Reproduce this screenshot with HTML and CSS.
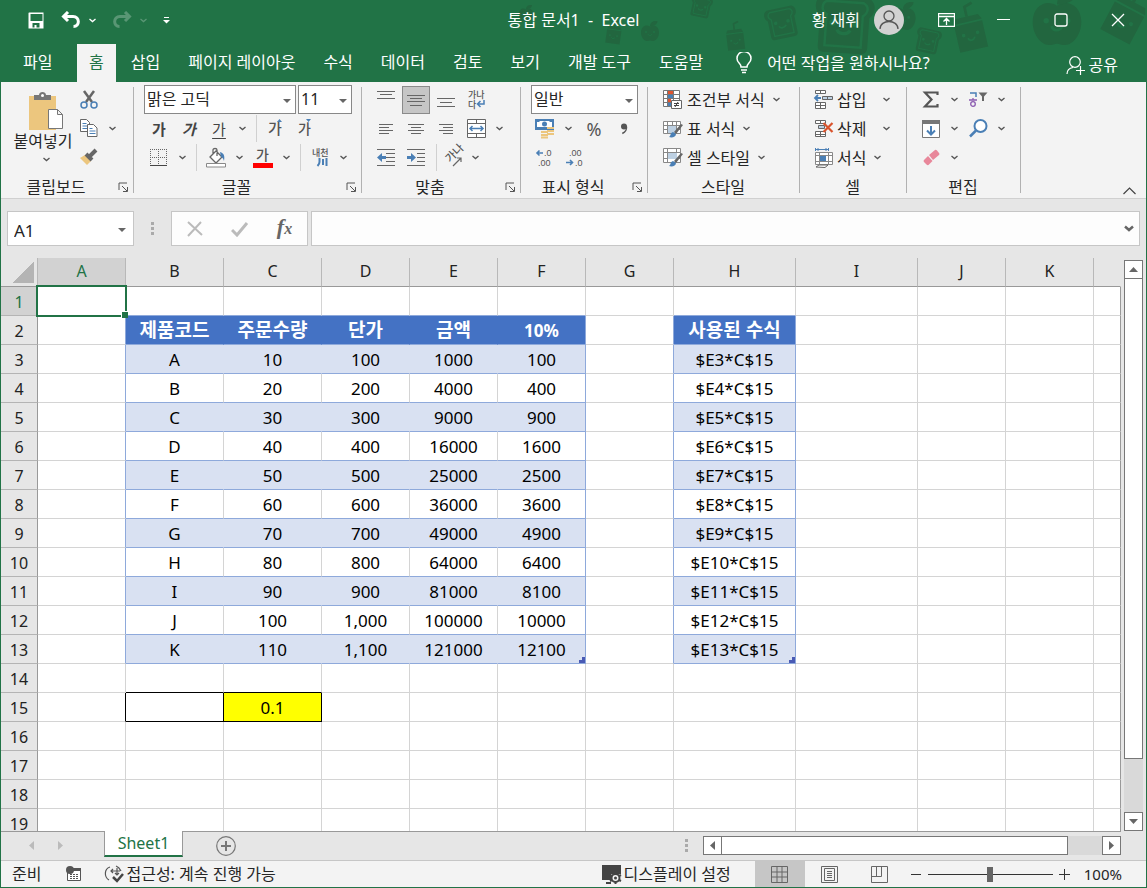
FILE: index.html
```html
<!DOCTYPE html>
<html lang="ko">
<head>
    <meta charset="UTF-8">
    <meta name="viewport" content="width=device-width, initial-scale=1.0">
    <title>통합 문서1 - Excel</title>
    <link rel="stylesheet" href="styles.css">
</head>
<body>
    <svg class="defs" aria-hidden="true">
        <symbol id="chev" viewBox="0 0 7 5"><path d="M.5 1l3 2.600 3-2.600" fill="none" stroke="currentColor" stroke-width="1.300"/></symbol>
        <symbol id="launch" viewBox="0 0 11 11"><path d="M1 8V1h8M4 4l5 5M9.500 5v4.500H5" fill="none" stroke="#555"/></symbol>
        <symbol id="brushcell" viewBox="0 0 20 19">
            <path d="M11 13l7-8 2 1-7 9z" fill="#666"/><path d="M6 18c2-1 1-4 4-5l3 2c0 3-4 4-7 3z" fill="#4a7fb5"/>
        </symbol>
        <symbol id="toast" viewBox="0 0 40 40">
            <path d="M6 3h28c5 2 5 9 1 12v18c0 3-2 4-4 4H9c-3 0-4-1-4-4V15C1 12 1 5 6 3z" fill="currentColor"/>
            <path d="M9 6h22c4 2 3 6 0 8v19H9V14C5 12 6 7 9 6z" fill="none" stroke="#217346" stroke-width="1.500"/>
            <circle cx="13" cy="19" r="2" fill="#217346"/><circle cx="27" cy="19" r="2" fill="#217346"/>
            <path d="M16 23c1 3 6 3 8 0" fill="none" stroke="#217346" stroke-width="2"/>
        </symbol>
        <symbol id="carton" viewBox="0 0 40 56">
            <path d="M4 24h32v30H4zM7 16h26l3 6H4z" fill="currentColor"/>
            <path d="M20 16V5l9-3" fill="none" stroke="currentColor" stroke-width="3"/>
            <circle cx="12" cy="36" r="2" fill="#217346"/><circle cx="28" cy="36" r="2" fill="#217346"/>
            <path d="M16 40c1 4 6 4 8 0" fill="none" stroke="#217346" stroke-width="2"/>
        </symbol>
        <symbol id="apple" viewBox="0 0 40 44">
            <path d="M20 13c7-5 18-1 18 12 0 9-6 17-12 17-3 0-4-1-6-1s-3 1-6 1C8 42 2 34 2 25 2 12 13 8 20 13z" fill="currentColor"/>
            <path d="M20 12c0-7 6-11 15-10 0 6-6 10-15 10z" fill="currentColor"/>
            <circle cx="12" cy="24" r="2" fill="#217346"/><circle cx="28" cy="24" r="2" fill="#217346"/>
            <path d="M16 28c1 4 6 4 8 0" fill="none" stroke="#217346" stroke-width="2"/>
        </symbol>
    </svg>

    <div class="window">
        <header class="head">
            <svg class="doodles" width="637" height="60" aria-hidden="true">
                <use href="#apple" x="9" y="3" width="16" height="20"/>
                <use href="#carton" x="96" y="18" width="18" height="28" transform="rotate(8 105 32)"/>
                <use href="#apple" x="131" y="20" width="20" height="22"/>
                <use href="#toast" x="180" y="-5" width="24" height="24" transform="rotate(12 192 7)"/>
                <use href="#carton" x="214" y="21" width="24" height="30" transform="rotate(-7 226 36)"/>
                <use href="#toast" x="255" y="5" width="36" height="36" transform="rotate(-12 273 23)"/>
                <use href="#toast" x="302" y="-8" width="66" height="66" transform="rotate(4 335 25)"/>
                <use href="#apple" x="380" y="0" width="28" height="32"/>
                <use href="#toast" x="405" y="27" width="28" height="28" transform="rotate(12 419 41)"/>
                <use href="#carton" x="440" y="2" width="40" height="50" transform="rotate(-13 460 27)"/>
                <use href="#apple" x="521" y="-12" width="54" height="60"/>
                <use href="#carton" x="596" y="-16" width="46" height="58" transform="rotate(28 619 12)"/>
            </svg>
            <div class="titlebar">
                <div class="qat">
                    <button aria-label="저장"><svg width="17" height="17" viewBox="0 0 17 17"><path d="M1 .5h14.500v16H.500V1zM2.500 2v7h12V2zM4.500 11v4.500h2V13h2v2.500h3V11z" fill="#fff" fill-rule="evenodd"/></svg></button>
                    <span class="split">
                        <button aria-label="실행 취소"><svg width="20" height="18" viewBox="0 0 20 18"><path d="M7 1L2.500 5.500 7 10M3 5.500h9c7 0 7 10 .500 10" fill="none" stroke="#fff" stroke-width="3"/></svg></button>
                        <button aria-label="실행 취소 목록"><svg width="7" height="5"><use href="#chev"/></svg></button>
                    </span>
                    <span class="split faded">
                        <button aria-label="다시 실행"><svg width="20" height="18" viewBox="0 0 20 18"><path d="M13 1l4.500 4.500L13 10M17 5.500H8c-7 0-7 10-.500 10" fill="none" stroke="#fff" stroke-width="3"/></svg></button>
                        <button aria-label="다시 실행 목록"><svg width="7" height="5"><use href="#chev"/></svg></button>
                    </span>
                    <button aria-label="빠른 실행 도구 모음 사용자 지정"><svg width="7" height="7"><path d="M1 .500h5" stroke="#fff"/><path d="M0 3h7L3.500 6.500z" fill="#fff"/></svg></button>
                </div>
                <div class="doc-title">통합 문서1&nbsp; -&nbsp; Excel</div>
                <div class="account">
                    <span>황 재휘</span>
                    <svg class="avatar" width="30" height="30"><circle cx="15" cy="15" r="15" fill="#d2d2d2"/><circle cx="15" cy="11" r="5" fill="none" stroke="#555" stroke-width="1.300"/><path d="M6 24c0-10 18-10 18 0" fill="none" stroke="#555" stroke-width="1.300"/></svg>
                    <button class="win-btn" aria-label="리본 메뉴 표시 옵션"><svg width="17" height="14"><path d="M.500.500h16v13H.500zM.500 3.500h16M8.500 12V6M5.500 8.500l3-3 3 3" fill="none" stroke="#fff" stroke-width="1.300"/></svg></button>
                    <button class="win-btn" aria-label="최소화"><svg width="14" height="14"><path d="M0 6.500h13" stroke="#fff"/></svg></button>
                    <button class="win-btn" aria-label="최대화"><svg width="14" height="14"><rect x="1" y="1" width="12" height="12" rx="2" fill="none" stroke="#fff" stroke-width="1.300"/></svg></button>
                    <button class="win-btn" aria-label="닫기"><svg width="14" height="14"><path d="M1 1l12 12M13 1L1 13" stroke="#fff" stroke-width="1.300"/></svg></button>
                </div>
            </div>
            <nav class="tabs">
                <a class="file" href="#">파일</a>
                <a class="active" href="#">홈</a>
                <a href="#">삽입</a>
                <a href="#">페이지 레이아웃</a>
                <a href="#">수식</a>
                <a href="#">데이터</a>
                <a href="#">검토</a>
                <a href="#">보기</a>
                <a href="#">개발 도구</a>
                <a href="#">도움말</a>
                <button class="tell">
                    <svg width="16" height="22" viewBox="0 0 16 22"><path d="M5 15c0-4-4-4-4-8.500a6.500 6.500 0 0 1 14 0C15 11 11 11 11 15zM5 18h6M6 20.500h4" fill="none" stroke="#fff" stroke-width="1.500"/></svg>
                    어떤 작업을 원하시나요?
                </button>
                <button class="share">
                    <svg width="19" height="19"><circle cx="9" cy="6" r="5.300" fill="none" stroke="#fff" stroke-width="1.200"/><path d="M1 18c0-4 3-6 6-6.500M14.500 10v9M10 14.500h9" fill="none" stroke="#fff" stroke-width="1.200"/></svg>
                    공유
                </button>
            </nav>
        </header>

        <section class="ribbon">
            <div class="group g-clip">
                <div class="clip">
                    <button class="paste">
                        <svg width="34" height="39"><path d="M0 5h27v34H0z" fill="#ecc67e"/><path d="M5 4h5c0-4 7-4 7 0h5v5H5z" fill="#777"/><circle cx="13.500" cy="4.500" r="1.500" fill="#fff"/><path d="M19.500 18.500h9l5 5v14h-14zM28.500 18.500v5h5" fill="#fff" stroke="#777"/></svg>
                        <span>붙여넣기</span>
                        <svg width="7" height="5"><use href="#chev"/></svg>
                    </button>
                    <div class="rows">
                        <div class="row"><button class="ico" aria-label="잘라내기"><svg width="18" height="19"><path d="M4 1l8 11M14 1L6 12" stroke="#666" stroke-width="2.500"/><circle cx="4" cy="15" r="3" fill="none" stroke="#4a7fb5" stroke-width="1.500"/><circle cx="14" cy="15" r="3" fill="none" stroke="#4a7fb5" stroke-width="1.500"/></svg></button></div>
                        <div class="row"><button class="ico" aria-label="복사"><svg width="18" height="19"><path d="M.500.500h6l3 3v9h-9z" fill="#fff" stroke="#666"/><path d="M2.500 4.500h4M2.500 7h5M2.500 9.500h5" stroke="#4a7fb5"/><path d="M7.500 5.500h6l3.500 3.500v8.500H7.500z" fill="#fff" stroke="#666"/><path d="M9.500 9.500h3M9.500 12h6M9.500 14.500h6" stroke="#4a7fb5"/></svg></button><button class="dd" aria-label="복사 옵션"><svg width="7" height="5"><use href="#chev"/></svg></button></div>
                        <div class="row"><button class="ico" aria-label="서식 복사"><svg width="18" height="17"><path d="M0 9l5-3 6 6-4 4z" fill="#ecc67e"/><path d="M6 5l6 6M9 8l7-7" stroke="#666" stroke-width="4"/></svg></button></div>
                    </div>
                </div>
                <div class="caption"><span>클립보드</span><button aria-label="클립보드 옵션"><svg width="11" height="11"><use href="#launch"/></svg></button></div>
            </div>

            <div class="group g-font">
                <div class="row">
                    <span class="pick font-name"><select aria-label="글꼴"><option>맑은 고딕</option></select></span>
                    <span class="pick font-size"><select aria-label="글꼴 크기"><option>11</option></select></span>
                </div>
                <div class="row">
                    <button class="ico ga bold">가</button>
                    <button class="ico ga bold italic">가</button>
                    <button class="ico ga under">가</button>
                    <button class="dd" aria-label="밑줄 옵션"><svg width="7" height="5"><use href="#chev"/></svg></button>
                    <i class="sep"></i>
                    <button class="ico" aria-label="글꼴 크기 크게"><svg width="18" height="19"><text class="st" x="1" y="15" font-size="15">가</text><path d="M10 3l2.500-3L15 3z" fill="#4a7fb5"/></svg></button>
                    <button class="ico" aria-label="글꼴 크기 작게"><svg width="18" height="19"><text class="st" x="1" y="15" font-size="14">가</text><path d="M9 0l2.500 3L14 0z" fill="#4a7fb5"/></svg></button>
                </div>
                <div class="row">
                    <button class="ico" aria-label="테두리"><svg width="18" height="18"><path d="M.500 0v17M8.500 0v17M16.500 0v17M0 .500h17M0 8.500h17" stroke="#666" stroke-dasharray="1 1"/><path d="M0 16.500h17" stroke="#444"/></svg></button>
                    <button class="dd" aria-label="테두리 옵션"><svg width="7" height="5"><use href="#chev"/></svg></button>
                    <i class="sep"></i>
                    <button class="ico" aria-label="채우기 색"><svg width="21" height="20"><path d="M4 9l6-6 6 6-6 6zM7 6V2c0-2 4-2 4 0v6" fill="#fff" stroke="#666" stroke-width="1.300"/><path d="M14 4c4 1 5 4 4 9-1-3-2-4-3-4z" fill="#4a7fb5"/><path d="M.500 15.500h19v3.500H.500z" fill="#fff" stroke="#888"/></svg></button>
                    <button class="dd" aria-label="채우기 색 옵션"><svg width="7" height="5"><use href="#chev"/></svg></button>
                    <button class="ico" aria-label="글꼴 색"><svg width="20" height="20"><text class="st" x="3" y="12" font-size="14">가</text><path d="M0 15h20v5H0z" fill="#f00"/></svg></button>
                    <button class="dd" aria-label="글꼴 색 옵션"><svg width="7" height="5"><use href="#chev"/></svg></button>
                    <i class="sep"></i>
                    <button class="ico" aria-label="윗주 필드"><svg width="18" height="19"><text class="st" x="1" y="8" font-size="9">내천</text><path d="M8.500 10v4c0 2-1 3-2 4M12 11v6M15.500 10v8" fill="none" stroke="#4a7fb5" stroke-width="2"/></svg></button>
                    <button class="dd" aria-label="윗주 옵션"><svg width="7" height="5"><use href="#chev"/></svg></button>
                </div>
                <div class="caption"><span>글꼴</span><button aria-label="글꼴 설정"><svg width="11" height="11"><use href="#launch"/></svg></button></div>
            </div>

            <div class="group g-align">
                <div class="row">
                    <button class="ico" aria-label="위쪽 맞춤"><svg width="18" height="18"><path d="M0 .500h18M3 3.500h12M0 7.500h18" stroke="#666"/></svg></button>
                    <button class="ico on" aria-label="가운데 맞춤"><svg width="18" height="18"><path d="M0 4.500h18M3 7.500h12M0 10.500h18M3 14.500h12" stroke="#666"/></svg></button>
                    <button class="ico" aria-label="아래쪽 맞춤"><svg width="18" height="18"><path d="M0 7.500h18M3 11.500h12M0 15.500h18" stroke="#666"/></svg></button>
                    <button class="ico" aria-label="텍스트 줄 바꿈"><svg width="18" height="19"><text class="st" x="1" y="8" font-size="9">가나</text><text class="st" x="1" y="18" font-size="9">다</text><path d="M17 10v4h-6M13.500 11l-3 3 3 3" fill="none" stroke="#4a7fb5" stroke-width="1.500"/></svg></button>
                </div>
                <div class="row">
                    <button class="ico" aria-label="왼쪽 맞춤"><svg width="14" height="12"><path d="M0 1.500h14M0 4.500h10M0 7.500h14M0 10.500h10" stroke="#666"/></svg></button>
                    <button class="ico" aria-label="텍스트 가운데 맞춤"><svg width="16" height="12"><path d="M0 1.500h16M3 4.500h10M0 7.500h16M3 10.500h10" stroke="#666"/></svg></button>
                    <button class="ico" aria-label="오른쪽 맞춤"><svg width="14" height="12"><path d="M0 1.500h14M4 4.500h10M0 7.500h14M4 10.500h10" stroke="#666"/></svg></button>
                    <button class="ico" aria-label="병합하고 가운데 맞춤"><svg width="19" height="19"><path d="M.500.500h18v18H.500zM.500 4.500h18M.500 14.500h18M9.500.500v4M9.500 14.500v4" fill="#fff" stroke="#666"/><path d="M3 9.500h13M5.500 7l-2.500 2.500L5.500 12M13.500 7l2.500 2.500-2.500 2.500" fill="none" stroke="#4a7fb5" stroke-width="1.500"/></svg></button>
                    <button class="dd" aria-label="병합 옵션"><svg width="7" height="5"><use href="#chev"/></svg></button>
                </div>
                <div class="row">
                    <button class="ico" aria-label="내어쓰기"><svg width="18" height="17"><path d="M0 .500h18M9 4.500h9M9 8.500h9M9 12.500h9M0 16.500h18" stroke="#666"/><path d="M0 8.500L5 4v3h4v3H5v3z" fill="#4a7fb5"/></svg></button>
                    <button class="ico" aria-label="들여쓰기"><svg width="18" height="17"><path d="M0 .500h18M10 4.500h8M10 8.500h8M10 12.500h8M0 16.500h18" stroke="#666"/><path d="M9 8.500L4 4v3H0v3h4v3z" fill="#4a7fb5"/></svg></button>
                    <i class="sep"></i>
                    <button class="ico narrow" aria-label="방향"><svg width="20" height="19"><text class="st" x="0" y="0" font-size="11" transform="translate(6 15) rotate(-45)">가나</text><path d="M9 18l8-8M13 10h4v4" fill="none" stroke="#666" stroke-width="1.200"/></svg></button>
                    <button class="dd" aria-label="방향 옵션"><svg width="7" height="5"><use href="#chev"/></svg></button>
                </div>
                <div class="caption"><span>맞춤</span><button aria-label="맞춤 설정"><svg width="11" height="11"><use href="#launch"/></svg></button></div>
            </div>

            <div class="group g-number">
                <div class="row"><span class="pick num-format"><select aria-label="표시 형식"><option>일반</option></select></span></div>
                <div class="row">
                    <button class="ico" aria-label="회계 표시 형식"><svg width="20" height="19"><path d="M0 0h19v11H0z" fill="#4a7fb5"/><path d="M2 3h2l1-1h9l1 1h2v5H2z" fill="#fff"/><circle cx="9.500" cy="5" r="2.500" fill="#4a7fb5"/><path d="M12 9h7M12 12h7M12 15h7M6 13h7M6 16h7M6 18.500h7" stroke="#ecc67e" stroke-width="2"/></svg></button>
                    <button class="dd" aria-label="회계 형식 옵션"><svg width="7" height="5"><use href="#chev"/></svg></button>
                    <button class="ico sign">%</button>
                    <button class="ico" aria-label="쉼표 스타일"><svg width="8" height="12"><circle cx="4" cy="3.500" r="3" fill="#555"/><path d="M6.300 3c1 3-1 6-4 7.500" fill="none" stroke="#555" stroke-width="1.500"/></svg></button>
                </div>
                <div class="row">
                    <button class="ico" aria-label="자릿수 늘림"><svg width="18" height="20"><text class="st num" x="8" y="8" font-size="9">.0</text><text class="st num" x="2" y="18" font-size="9">.00</text><path d="M7 5H1M3.500 2.500L1 5l2.500 2.500" fill="none" stroke="#4a7fb5" stroke-width="1.600"/></svg></button>
                    <button class="ico" aria-label="자릿수 줄임"><svg width="18" height="20"><text class="st num" x="3" y="8" font-size="9">.00</text><text class="st num" x="9" y="18" font-size="9">.0</text><path d="M0 14.500h6.500M4 12l2.500 2.500L4 17" fill="none" stroke="#4a7fb5" stroke-width="1.600"/></svg></button>
                </div>
                <div class="caption"><span>표시 형식</span><button aria-label="표시 형식 설정"><svg width="11" height="11"><use href="#launch"/></svg></button></div>
            </div>

            <div class="group g-style">
                <div class="row"><button class="cmd"><svg width="20" height="19"><path d="M.500.500h16v16H.500zM4.500.500v16M10.500.500v16M.500 4.500h16M.500 8.500h16M.500 12.500h16" fill="#fff" stroke="#777"/><path d="M5 1h5v3H5zM5 9h3v3H5z" fill="#e0532f"/><path d="M5 5h5v3H5zM5 13h3v3H5z" fill="#4a7fb5"/><path d="M8.500 10.500h10v8h-10z" fill="#fff" stroke="#666"/><path d="M11 13.500h5M11 15.500h5M15 12l-3 5" stroke="#444"/></svg><span>조건부 서식</span><svg width="7" height="5"><use href="#chev"/></svg></button></div>
                <div class="row"><button class="cmd"><svg width="20" height="19"><path d="M.500 2.500h17v12H.500zM4.500 2.500v12M9.500 2.500v12M13.500 2.500v12M.500 6.500h17M.500 10.500h17" fill="#fff" stroke="#888"/><path d="M5 7h8v7H5z" fill="#bdd0e2"/><use href="#brushcell" width="20" height="19"/></svg><span>표 서식</span><svg width="7" height="5"><use href="#chev"/></svg></button></div>
                <div class="row"><button class="cmd"><svg width="20" height="19"><path d="M.500.500h17v14H.500zM4.500.500v14M.500 4.500h17M.500 10.500h17M13.500.500v14" fill="#fff" stroke="#888"/><path d="M5 5h9v6H5z" fill="#bdd0e2"/><use href="#brushcell" width="20" height="19"/></svg><span>셀 스타일</span><svg width="7" height="5"><use href="#chev"/></svg></button></div>
                <div class="caption plain"><span>스타일</span></div>
            </div>

            <div class="group g-cell">
                <div class="row"><button class="cmd"><svg width="19" height="19"><path d="M1.500.500h10v3h-10zM6.500.500v3M1.500 12.500h10v6h-10zM6.500 12.500v6M1.500 15.500h10" fill="#fff" stroke="#666"/><path d="M8.500 6.500h10v3h-10zM13.500 6.500v3" fill="#bdd0e2" stroke="#666"/><path d="M7 8H1M4 5L1 8l3 3" fill="none" stroke="#4a7fb5" stroke-width="1.800"/></svg><span>삽입</span></button><button class="dd far" aria-label="삽입 옵션"><svg width="7" height="5"><use href="#chev"/></svg></button></div>
                <div class="row"><button class="cmd"><svg width="19" height="19"><path d="M1.500 1.500h10v3h-10zM6.500 1.500v3M1.500 12.500h10v5h-10zM6.500 12.500v5M1.500 15.500h10" fill="#fff" stroke="#666"/><path d="M4.500 6.500h6v3h-6z" fill="#bdd0e2" stroke="#666"/><path d="M9.500 4l9 9M18.500 4l-9 9" stroke="#d9532c" stroke-width="2.200"/></svg><span>삭제</span></button><button class="dd far" aria-label="삭제 옵션"><svg width="7" height="5"><use href="#chev"/></svg></button></div>
                <div class="row"><button class="cmd"><svg width="19" height="20"><path d="M1 1.500h14M1.500 0v3M14.500 0v3M4 0v3M12 0v3" stroke="#4a7fb5"/><path d="M1.500 4.500h17v12h-17zM5.500 4.500v12M14.500 4.500v12M1.500 7.500h17M1.500 13.500h17" fill="#fff" stroke="#888"/><path d="M6 8h6v5H6z" fill="#4a7fb5"/><path d="M2 19l3-2h9l-3 2.500z" fill="#fff" stroke="#666"/></svg><span>서식</span><svg width="7" height="5"><use href="#chev"/></svg></button></div>
                <div class="caption plain"><span>셀</span></div>
            </div>

            <div class="group g-edit">
                <div class="row">
                    <button class="ico" aria-label="자동 합계"><svg width="16" height="17"><path d="M14.500 4V1.500H2l6.500 7-6.500 7h12.500V13" fill="none" stroke="#555" stroke-width="2.200"/></svg></button>
                    <button class="dd" aria-label="합계 옵션"><svg width="7" height="5"><use href="#chev"/></svg></button>
                    <button class="ico" aria-label="정렬 및 필터"><svg width="19" height="17"><path d="M1 2h6v4" fill="none" stroke="#4a7fb5" stroke-width="1.500"/><path d="M0 9h8M4 7v2" stroke="#8b5bb0" stroke-width="1.300"/><circle cx="4" cy="13" r="2.300" fill="none" stroke="#8b5bb0" stroke-width="1.300"/><path d="M9.500 1.500h9l-3.500 4v4.500h-2V5.500z" fill="#666"/></svg></button>
                    <button class="dd" aria-label="정렬 옵션"><svg width="7" height="5"><use href="#chev"/></svg></button>
                </div>
                <div class="row">
                    <button class="ico" aria-label="채우기"><svg width="18" height="18"><path d="M.500.500h17v17H.500z" fill="#fff" stroke="#777"/><path d="M0 0h18v4H0z" fill="#777"/><path d="M9 6v8M5 10.500l4 4 4-4" fill="none" stroke="#4a7fb5" stroke-width="2"/></svg></button>
                    <button class="dd" aria-label="채우기 옵션"><svg width="7" height="5"><use href="#chev"/></svg></button>
                    <button class="ico" aria-label="찾기 및 선택"><svg width="19" height="19"><circle cx="11.500" cy="7" r="6" fill="#fff" stroke="#4a7fb5" stroke-width="2"/><path d="M7 11.500L1 17.500" stroke="#4a7fb5" stroke-width="2.500"/></svg></button>
                    <button class="dd" aria-label="찾기 옵션"><svg width="7" height="5"><use href="#chev"/></svg></button>
                </div>
                <div class="row">
                    <button class="ico" aria-label="지우기"><svg width="17" height="17"><path d="M6 6l6-5q1-.500 2 .500l2 2.500q1 1 0 2l-6 5z" fill="#e8879a"/><path d="M5 7l4.500 5-4 4q-1 .500-2-.500L1 13q-1-1 0-2z" fill="#e8879a"/></svg></button>
                    <button class="dd" aria-label="지우기 옵션"><svg width="7" height="5"><use href="#chev"/></svg></button>
                </div>
                <div class="caption plain"><span>편집</span></div>
            </div>
            <button class="collapse" aria-label="리본 메뉴 축소"><svg width="13" height="8"><path d="M.500 7l6-6 6 6" fill="none" stroke="#444" stroke-width="1.200"/></svg></button>
        </section>

        <section class="formula">
            <span class="pick name-box"><input type="text" aria-label="이름 상자" value="A1"></span>
            <i class="dots"></i>
            <div class="fx-box">
                <button aria-label="취소"><svg width="16" height="16"><path d="M1 1l14 13M14 1L1 15" stroke="#bbb" stroke-width="2"/></svg></button>
                <button aria-label="입력"><svg width="18" height="16"><path d="M1 9l5 5L16 2" fill="none" stroke="#bbb" stroke-width="3"/></svg></button>
                <button class="fx" aria-label="함수 삽입"><i>f</i><i class="x">x</i></button>
            </div>
            <div class="fx-input">
                <input type="text" aria-label="수식 입력줄">
                <button aria-label="수식 입력줄 확장"><svg width="10" height="7"><path d="M1 1.500l4 3.500 4-3.500" fill="none" stroke="#666" stroke-width="2.500"/></svg></button>
            </div>
        </section>

        <main class="grid-area">
            <div class="sheet">
                <table>
                    <colgroup>
                        <col class="w-row"><col class="w-s"><col class="w-m"><col class="w-m"><col class="w-s"><col class="w-s"><col class="w-s"><col class="w-s"><col class="w-l"><col class="w-l"><col class="w-s"><col class="w-s"><col>
                    </colgroup>
                    <thead>
                        <tr><th class="corner"></th><th class="sel">A</th><th>B</th><th>C</th><th>D</th><th>E</th><th>F</th><th>G</th><th>H</th><th>I</th><th>J</th><th>K</th><th></th></tr>
                    </thead>
                    <tbody>
                        <tr class="first"><th class="sel">1</th><td class="cursor"></td><td></td><td></td><td></td><td></td><td></td><td></td><td></td><td></td><td></td><td></td><td></td></tr>
                        <tr class="data title"><th>2</th><td></td><td>제품코드</td><td>주문수량</td><td>단가</td><td>금액</td><td>10%</td><td></td><td>사용된 수식</td><td></td><td></td><td></td><td></td></tr>
                        <tr class="data band"><th>3</th><td></td><td>A</td><td>10</td><td>100</td><td>1000</td><td>100</td><td></td><td>$E3*C$15</td><td></td><td></td><td></td><td></td></tr>
                        <tr class="data"><th>4</th><td></td><td>B</td><td>20</td><td>200</td><td>4000</td><td>400</td><td></td><td>$E4*C$15</td><td></td><td></td><td></td><td></td></tr>
                        <tr class="data band"><th>5</th><td></td><td>C</td><td>30</td><td>300</td><td>9000</td><td>900</td><td></td><td>$E5*C$15</td><td></td><td></td><td></td><td></td></tr>
                        <tr class="data"><th>6</th><td></td><td>D</td><td>40</td><td>400</td><td>16000</td><td>1600</td><td></td><td>$E6*C$15</td><td></td><td></td><td></td><td></td></tr>
                        <tr class="data band"><th>7</th><td></td><td>E</td><td>50</td><td>500</td><td>25000</td><td>2500</td><td></td><td>$E7*C$15</td><td></td><td></td><td></td><td></td></tr>
                        <tr class="data"><th>8</th><td></td><td>F</td><td>60</td><td>600</td><td>36000</td><td>3600</td><td></td><td>$E8*C$15</td><td></td><td></td><td></td><td></td></tr>
                        <tr class="data band"><th>9</th><td></td><td>G</td><td>70</td><td>700</td><td>49000</td><td>4900</td><td></td><td>$E9*C$15</td><td></td><td></td><td></td><td></td></tr>
                        <tr class="data"><th>10</th><td></td><td>H</td><td>80</td><td>800</td><td>64000</td><td>6400</td><td></td><td>$E10*C$15</td><td></td><td></td><td></td><td></td></tr>
                        <tr class="data band"><th>11</th><td></td><td>I</td><td>90</td><td>900</td><td>81000</td><td>8100</td><td></td><td>$E11*C$15</td><td></td><td></td><td></td><td></td></tr>
                        <tr class="data"><th>12</th><td></td><td>J</td><td>100</td><td>1,000</td><td>100000</td><td>10000</td><td></td><td>$E12*C$15</td><td></td><td></td><td></td><td></td></tr>
                        <tr class="data band"><th>13</th><td></td><td>K</td><td>110</td><td>1,100</td><td>121000</td><td class="end">12100</td><td></td><td class="end">$E13*C$15</td><td></td><td></td><td></td><td></td></tr>
                        <tr class="above"><th>14</th><td></td><td></td><td></td><td></td><td></td><td></td><td></td><td></td><td></td><td></td><td></td><td></td></tr>
                        <tr class="rate"><th>15</th><td></td><td></td><td>0.1</td><td></td><td></td><td></td><td></td><td></td><td></td><td></td><td></td><td></td></tr>
                        <tr><th>16</th><td></td><td></td><td></td><td></td><td></td><td></td><td></td><td></td><td></td><td></td><td></td><td></td></tr>
                        <tr><th>17</th><td></td><td></td><td></td><td></td><td></td><td></td><td></td><td></td><td></td><td></td><td></td><td></td></tr>
                        <tr><th>18</th><td></td><td></td><td></td><td></td><td></td><td></td><td></td><td></td><td></td><td></td><td></td><td></td></tr>
                        <tr><th>19</th><td></td><td></td><td></td><td></td><td></td><td></td><td></td><td></td><td></td><td></td><td></td><td></td></tr>
                    </tbody>
                </table>
            </div>
            <div class="vscroll">
                <button aria-label="위로 스크롤"><svg width="9" height="5"><path d="M0 5l4.500-5L9 5z" fill="#666"/></svg></button>
                <div class="thumb"></div>
                <div class="track"></div>
                <button aria-label="아래로 스크롤"><svg width="9" height="5"><path d="M0 0l4.500 5L9 0z" fill="#666"/></svg></button>
            </div>
        </main>

        <footer>
            <div class="sheet-bar">
                <button class="nav" aria-label="이전 시트"><svg width="5" height="9"><path d="M5 0L0 4.500 5 9z" fill="#bbb"/></svg></button>
                <button class="nav" aria-label="다음 시트"><svg width="5" height="9"><path d="M0 0l5 4.500L0 9z" fill="#bbb"/></svg></button>
                <a class="sheet-tab" href="#">Sheet1</a>
                <button class="add" aria-label="새 시트"><svg width="20" height="20"><circle cx="10" cy="10" r="9.300" fill="none" stroke="#777" stroke-width="1.200"/><path d="M10 5v10M5 10h10" stroke="#777" stroke-width="2"/></svg></button>
                <i class="dots"></i>
                <div class="hscroll">
                    <button aria-label="왼쪽으로 스크롤"><svg width="5" height="9"><path d="M5 0L0 4.500 5 9z" fill="#666"/></svg></button>
                    <div class="thumb"></div>
                    <div class="track"></div>
                    <button aria-label="오른쪽으로 스크롤"><svg width="5" height="9"><path d="M0 0l5 4.500L0 9z" fill="#666"/></svg></button>
                </div>
            </div>
            <div class="status">
                <span>준비</span>
                <button class="macro" aria-label="매크로 기록"><svg width="16" height="16"><path d="M1.500 2.500h13v12h-13z" fill="#fff" stroke="#555"/><path d="M4 2h11v3H4z" fill="#555"/><circle cx="4" cy="4" r="4" fill="#555"/><path d="M4 8.500h9M4 10.500h9M4 12.500h9" stroke="#555" stroke-dasharray="2 1"/></svg></button>
                <button class="access"><svg width="20" height="18"><path d="M6 2C0 4 0 12 5 15M12 1c3 1 4 3 5 5M7 6h9M9 4L7 6l2 2M13 3v7M11 8l2 2 2-2" fill="none" stroke="#555" stroke-width="1.200"/><path d="M9 12l4 4 6-7" fill="none" stroke="#444" stroke-width="2.500"/></svg>접근성: 계속 진행 가능</button>
                <button class="display"><svg width="20" height="19"><path d="M0 0h19v9H9v6H0zM4 17h5v2H4z" fill="#444"/><circle cx="13.500" cy="13" r="4" fill="#f3f3f3" stroke="#444" stroke-width="2"/><path d="M13.500 7v2M13.500 17v2M8 10l2 1M19 10l-2 1M8 16l2-1M19 16l-2-1" stroke="#444" stroke-width="2"/><circle cx="13.500" cy="13" r="1.500" fill="#444"/></svg>디스플레이 설정</button>
                <button class="view on" aria-label="기본"><svg width="17" height="17"><path d="M.500.500h16v16H.500zM6 .500v16M11 .500v16M.500 6h16M.500 11h16" fill="none" stroke="#666"/></svg></button>
                <button class="view" aria-label="페이지 레이아웃 보기"><svg width="17" height="17"><path d="M.500.500h16v16H.500zM3.500 2.500h10v12h-10zM6 5.500h5M6 7.500h5M6 9.500h5M6 11.500h5" fill="none" stroke="#666"/></svg></button>
                <button class="view" aria-label="페이지 나누기 미리 보기"><svg width="17" height="17"><path d="M.500.500h16v16H.500zM.500 10.500h10v-10M5.500.500v10" fill="none" stroke="#666"/></svg></button>
                <div class="zoom">
                    <button aria-label="축소"><svg width="11" height="11"><path d="M0 5.500h10" stroke="#333"/></svg></button>
                    <input type="range" aria-label="확대/축소" min="0" max="100" value="50">
                    <button aria-label="확대"><svg width="11" height="11"><path d="M0 5.500h11M5.500 0v11" stroke="#333"/></svg></button>
                </div>
                <span class="percent">100%</span>
            </div>
        </footer>
    </div>
</body>
</html>
```

FILE: styles.css
```css
* {
    box-sizing: border-box;
}
body {
    margin: 0;
    font-family: "Noto Sans", "Noto Sans CJK KR", sans-serif;
    font-size: 16px;
    line-height: 20px;
    color: #262626;
}
button, input, select {
    font: inherit;
    color: inherit;
    margin: 0;
    padding: 0;
    border: none;
    background: none;
    border-radius: 0;
}
button {
    display: flex;
    align-items: center;
    justify-content: center;
    white-space: nowrap;
}
svg {
    display: block;
    flex: none;
}
a {
    color: inherit;
    text-decoration: none;
}
.defs {
    position: absolute;
    width: 0;
    height: 0;
}
.window {
    display: flex;
    flex-direction: column;
    height: 100vh;
    background: #e6e6e6;
    border: 1px solid #217346;
    border-top: none;
    overflow: hidden;
}

/* title bar and tabs */
.head {
    position: relative;
    background: #217346;
    color: #fff;
}
.doodles {
    position: absolute;
    top: 0;
    right: 0;
    color: #22663f;
}
.titlebar {
    position: relative;
    display: grid;
    grid-template-columns: 1fr auto 1fr;
    align-items: center;
    height: 44px;
    padding-bottom: 4px;
}
.qat {
    display: flex;
    align-items: center;
    gap: 16px;
    padding-left: 27px;
}
.split {
    display: flex;
    align-items: center;
    gap: 8px;
}
.faded {
    opacity: .25;
}
.account {
    display: flex;
    align-items: center;
    justify-content: flex-end;
}
.avatar {
    margin: 0 14px;
}
.win-btn {
    width: 57px;
    height: 40px;
}
.tabs {
    position: relative;
    display: flex;
    gap: 2px;
    height: 38px;
}
.tabs a {
    padding: 8px 13px 0;
    white-space: nowrap;
}
.tabs .file {
    width: 74px;
    padding-left: 22px;
}
.tabs .active {
    padding: 8px 12px 0;
    background: #f3f3f3;
    color: #217346;
}
.tell {
    gap: 15px;
    margin-left: 18px;
}
.share {
    gap: 4px;
    margin-left: auto;
    padding: 4px 28px 0 0;
}

/* ribbon */
.ribbon {
    display: flex;
    flex: none;
    height: 117px;
    background: #f3f3f3;
    border-bottom: 1px solid #d0d0d0;
}
.group {
    position: relative;
    display: flex;
    flex-direction: column;
    flex: none;
    padding-top: 3px;
    color: #262626;
}
.group::after {
    content: "";
    position: absolute;
    top: 5px;
    right: 0;
    bottom: 5px;
    width: 1px;
    background: #b1b1b1;
}
.g-clip { width: 133px; }
.g-font { width: 228px; padding-left: 10px; }
.g-align { width: 159px; padding-left: 9px; }
.g-number { width: 127px; padding-left: 9px; }
.g-style { width: 152px; padding-left: 15px; }
.g-cell { width: 107px; padding-left: 14px; }
.g-edit { width: 114px; padding-left: 9px; }
.row {
    display: flex;
    align-items: center;
    height: 29px;
}
.ico {
    width: 30px;
    height: 28px;
}
.ico.narrow {
    width: 26px;
}
.ico.on {
    width: 28px;
    margin: 0 1px;
    background: #c6c6c6;
    border: 1px solid #8a8a8a;
}
.dd {
    width: 17px;
    height: 28px;
}
.dd.far {
    margin-left: 12px;
}
.group svg {
    color: #555;
    overflow: visible;
}
.sep {
    width: 1px;
    height: 27px;
    margin: 0 4px 0 5px;
    background: #d0d0d0;
}
.st {
    fill: #555;
    font-family: "Noto Sans", "Noto Sans CJK KR", sans-serif;
    font-weight: 500;
}
.st.num {
    font-family: "Liberation Sans", sans-serif;
}
.ga {
    font-size: 15px;
    color: #444;
}
.bold {
    font-weight: bold;
}
.italic {
    font-style: italic;
}
.under {
    text-decoration: underline;
    text-underline-offset: 3px;
}
.sign {
    margin-left: 2px;
    font-size: 18px;
    color: #555;
}
.clip {
    display: flex;
    height: 87px;
    padding-left: 12px;
}
.paste {
    flex-direction: column;
    justify-content: flex-start;
    padding-top: 6px;
    gap: 1px;
    width: 60px;
}
.paste svg {
    margin-left: 6px;
}
.paste svg:last-child {
    margin-top: 5px;
}
.rows {
    padding-left: 1px;
}
.cmd {
    gap: 4px;
}
.cmd span + svg {
    margin-left: 4px;
}
.caption {
    display: flex;
    align-items: center;
    height: 26px;
    padding-right: 5px;
}
.caption span {
    flex: 1;
    padding: 4px 7px 0 0;
    text-align: center;
}
.caption button {
    padding-top: 5px;
}
.g-align .caption, .g-number .caption, .g-edit .caption {
    margin-left: -9px;
}
.g-font .caption {
    margin-left: -10px;
}
.g-style .caption {
    margin-left: -15px;
}
.g-cell .caption {
    margin-left: -14px;
}
.caption.plain {
    padding-right: 0;
}
.caption.plain span {
    padding-right: 2px;
}
.collapse {
    align-self: flex-end;
    margin: 0 10px 3px auto;
}

/* drop-downs share one box with a triangle over the right end */
.pick {
    position: relative;
    display: block;
    background: #fff;
    border: 1px solid #888;
}
.pick::after {
    content: "";
    position: absolute;
    top: 50%;
    right: 4px;
    margin-top: -1px;
    border: 4px solid transparent;
    border-top-color: #666;
    border-bottom: none;
    pointer-events: none;
}
.pick select, .pick input {
    display: block;
    width: 100%;
    height: 27px;
    padding-left: 2px;
    appearance: none;
    line-height: 27px;
}
.font-name {
    width: 152px;
    margin-right: 2px;
}
.font-size {
    width: 54px;
}
.num-format {
    width: 107px;
    margin-left: 1px;
}

/* formula bar */
.formula {
    display: flex;
    flex: none;
    height: 59px;
    padding: 12px 6px;
}
.name-box {
    width: 127px;
    border-color: #c6c6c6;
}
.name-box::after {
    right: 7px;
}
.name-box input {
    height: 33px;
    padding-left: 6px;
    padding-top: 4px;
    font-size: 17px;
}
.dots {
    align-self: center;
    flex: none;
    width: 3px;
    height: 13px;
    margin: 0 17px;
    background: repeating-linear-gradient(#aaa 0 3px, transparent 3px 5px);
}
.fx-box, .fx-input {
    display: flex;
    background: #fdfdfd;
    border: 1px solid #c6c6c6;
}
.fx-box {
    width: 137px;
    margin-right: 3px;
}
.fx-box button {
    width: 45px;
}
.fx {
    padding-bottom: 4px;
    font-family: "Liberation Serif", serif;
    font-size: 22px;
    font-weight: bold;
    color: #666;
}
.fx .x {
    padding-top: 4px;
    font-size: 16px;
}
.fx-input {
    flex: 1;
}
.fx-input input {
    flex: 1;
    min-width: 0;
}
.fx-input button {
    width: 20px;
}

/* grid */
.grid-area {
    display: flex;
    flex: 1;
    min-height: 0;
}
.sheet {
    flex: 1;
    min-width: 0;
    overflow: hidden;
}
.sheet table {
    width: 100%;
    table-layout: fixed;
    border-spacing: 0;
    background: #fff;
}
.w-row { width: 37px; }
.w-s { width: 88px; }
.w-m { width: 98px; }
.w-l { width: 122px; }
.sheet tr {
    height: 29px;
}
.sheet th, .sheet td {
    height: 29px;
    padding: 2px 0 0;
    border-right: 1px solid #d4d4d4;
    border-bottom: 1px solid #d4d4d4;
    text-align: center;
    font-size: 17px;
    line-height: 22px;
    white-space: nowrap;
    color: #000;
}
.sheet th {
    font-size: 16px;
    font-weight: normal;
    background: #e6e6e6;
    color: #222;
}
.sheet thead th {
    padding: 0 0 2px;
    border-bottom-color: #999;
    border-right: 1px solid #b8b8b8;
}
.sheet tbody th {
    border-right-color: #999;
    border-bottom-color: #b4b4b4;
}
.sheet th.sel {
    background: #d2d2d2;
    color: #217346;
}
.sheet th.corner {
    background: linear-gradient(135deg, transparent 50%, #b4b4b4 50%) 12px 4px / 21px 21px no-repeat #e6e6e6;
}
.sheet tr > :last-child {
    border-right-color: #999;
}
.sheet thead tr > :last-child {
    border-right-color: #e6e6e6;
}
.cursor, .end {
    position: relative;
}
.cursor::before {
    content: "";
    position: absolute;
    inset: -2px;
    border: 2px solid #217346;
}
.cursor::after {
    content: "";
    position: absolute;
    right: -3px;
    bottom: -3px;
    width: 6px;
    height: 6px;
    background: #217346;
    border: solid #fff;
    border-width: 1px 0 0 1px;
}
.first td:nth-child(n+3):nth-child(-n+7), .first td:nth-child(9),
.data td:nth-child(n+3):nth-child(-n+7), .data td:nth-child(9) {
    border-bottom-color: #8ea9db;
}
.data td:nth-child(2), .data td:nth-child(7), .data td:nth-child(8), .data td:nth-child(9) {
    border-right-color: #8ea9db;
}
.band td:nth-child(n+3):nth-child(-n+7), .band td:nth-child(9) {
    background: #d9e1f2;
}
.band td:nth-child(n+3):nth-child(-n+6) {
    border-right-color: #d9e1f2;
}
.sheet .title td {
    padding: 0;
    font-size: 19px;
    font-weight: bold;
    color: #fff;
}
.sheet .title td:nth-child(7) {
    padding-top: 2px;
    font-size: 17px;
}
.title td:nth-child(n+3):nth-child(-n+7), .title td:nth-child(9) {
    background: #4472c4;
}
.title td:nth-child(n+3):nth-child(-n+6) {
    border-right-color: #4472c4;
}
.end::after {
    content: "";
    position: absolute;
    right: 0;
    bottom: 0;
    width: 6px;
    height: 6px;
    background: #4a5bb5;
    clip-path: polygon(50% 0, 100% 0, 100% 100%, 0 100%, 0 50%, 50% 50%);
}
.above td:nth-child(3), .above td:nth-child(4),
.rate td:nth-child(3), .rate td:nth-child(4) {
    border-bottom-color: #000;
}
.rate td:nth-child(2), .rate td:nth-child(3), .rate td:nth-child(4) {
    border-right-color: #000;
}
.rate td:nth-child(4) {
    background: #ff0;
}
.vscroll {
    display: flex;
    flex-direction: column;
    width: 19px;
    margin: 2px 3px 0;
}
.vscroll button, .hscroll button {
    flex: none;
    width: 19px;
    height: 19px;
    background: #fff;
    border: 1px solid #777;
}
.vscroll .thumb {
    flex: 9;
    background: #fff;
    border: 1px solid #777;
    border-top: none;
}
.vscroll .track {
    flex: 1;
    background: #d9d9d9;
}

/* sheet tabs and status bar */
.sheet-bar {
    display: flex;
    align-items: center;
    height: 29px;
    padding-right: 25px;
    background: linear-gradient(#999, #999) 0 0 / calc(100% - 25px) 1px no-repeat;
}
.nav {
    width: 29px;
    height: 28px;
}
.nav:first-child {
    margin-left: 16px;
}
.sheet-tab {
    align-self: flex-start;
    width: 79px;
    height: 26px;
    margin: 0 33px 0 29px;
    padding-top: 2px;
    background: #fff;
    border: solid #999;
    border-width: 0 1px;
    border-bottom: 2px solid #217346;
    text-align: center;
    color: #217346;
}
.sheet-bar .dots {
    margin-left: auto;
    margin-right: 15px;
}
.hscroll {
    display: flex;
    width: 418px;
}
.hscroll .thumb {
    flex: 10;
    background: #fff;
    border: 1px solid #777;
    border-left: none;
}
.hscroll .track {
    flex: 1;
    background: #d9d9d9;
}
.status {
    display: flex;
    align-items: center;
    height: 27px;
    padding: 0 24px 0 11px;
    background: #f3f3f3;
    border-top: 1px solid #c6c6c6;
}
.macro {
    margin: 0 22px 0 25px;
}
.access, .display {
    gap: 2px;
}
.display {
    margin: 0 24px 0 auto;
}
.view {
    width: 50px;
    height: 26px;
}
.view.on {
    background: #c6c6c6;
}
.zoom {
    display: flex;
    align-items: center;
    gap: 6px;
    margin: 0 14px 0 6px;
}
.zoom input {
    width: 125px;
    height: 16px;
    appearance: none;
    background: linear-gradient(#333, #333) center / 100% 1px no-repeat;
}
.zoom input::-webkit-slider-thumb {
    appearance: none;
    width: 6px;
    height: 15px;
    background: #666;
}
.percent {
    font-size: 15px;
}
```
